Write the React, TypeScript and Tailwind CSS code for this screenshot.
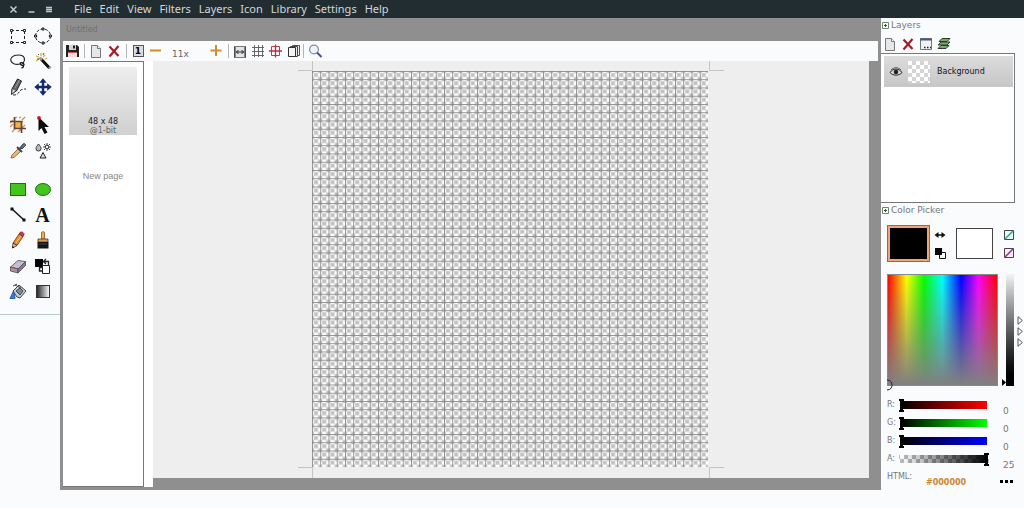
import type { ReactNode } from "react";

const MENUS = ["File", "Edit", "View", "Filters", "Layers", "Icon", "Library", "Settings", "Help"];

interface Tool {
  label: string;
  icon: ReactNode;
}

function Icon({ children }: { children: ReactNode }) {
  return (
    <svg aria-hidden="true" viewBox="0 0 18 18" className="size-[18px] shrink-0" fill="none">
      {children}
    </svg>
  );
}

const selectTools: Tool[] = [
  {
    label: "Rectangle selection",
    icon: (
      <Icon>
        <path d="M2 3.500H16M2 15.500H16" stroke="#222" strokeDasharray="3 2" />
        <path d="M2.500 4V15M15.500 4V15" stroke="#222" strokeDasharray="3 2" />
        <path d="M1.500 2.500h2v2h-2zM14.500 2.500h2v2h-2zM1.500 14.500h2v2h-2zM14.500 14.500h2v2h-2z" fill="#fff" stroke="#222" />
      </Icon>
    ),
  },
  {
    label: "Ellipse selection",
    icon: (
      <Icon>
        <ellipse cx="9" cy="9" rx="7.500" ry="7" stroke="#222" strokeDasharray="3 1.500" />
        <path d="M8 1h2v2H8zM8 15h2v2H8zM.6 8h2v2h-2zM15.400 8h2v2h-2z" fill="#fff" stroke="#111" />
      </Icon>
    ),
  },
  {
    label: "Lasso",
    icon: (
      <Icon>
        <path d="M13.500 11.500C17 8 16 3 9.500 3 3 3 1 6.500 2 9c1 3 5 4 9 3" stroke="#222" strokeWidth="1.100" />
        <path d="M11 11c1-1 4 0 4 1.500s-3 1.500-4-1.500M14 13c1 1 .5 2.500-1.500 3" stroke="#111" strokeWidth="1.300" />
      </Icon>
    ),
  },
  {
    label: "Magic wand",
    icon: (
      <Icon>
        <path d="M7 7l8.500 9" stroke="#111" strokeWidth="3" />
        <path d="M5.500 5.500L8 8M15 15l1.500 1.500" stroke="#999" strokeWidth="2.500" />
        <path d="M7 1v3M11 3L9 5M2 4l3 1M2 9l3-2M11 7l2-1" stroke="#d2ad35" strokeWidth="1.300" />
        <path d="M4 2l1 1M10 1l-1 2M3 7h2" stroke="#555" />
      </Icon>
    ),
  },
  {
    label: "Freehand selection",
    icon: (
      <Icon>
        <path d="M3 11L8.500 1l4 2L7.500 13l-4 2z" fill="#666" stroke="#222" />
        <path d="M6 10l4.500-8" stroke="#999" />
        <path d="M3 11l-.5 5.500L7 13" fill="#ddd" stroke="#222" />
        <path d="M4 17c4 0 5-1 6-3s3-3 7-3" stroke="#222" strokeDasharray="3 1.500" />
      </Icon>
    ),
  },
  {
    label: "Move",
    icon: (
      <Icon>
        <path d="M9 3v12M3 9h12" stroke="#14286e" strokeWidth="2.400" />
        <path d="M9 .3l3.700 4.500H5.300zM9 17.700l3.700-4.500H5.300zM.3 9l4.500-3.700v7.400zM17.700 9l-4.500-3.700v7.400z" fill="#14286e" />
      </Icon>
    ),
  },
];

const pickTools: Tool[] = [
  {
    label: "Crop",
    icon: (
      <Icon>
        <path d="M1 7l3-3M1 11l3-3M3 16l11-11M9 16l7-7M13 4l3-3M6 2l2-1M10 2l2-1" stroke="#d7894d" strokeWidth="1.200" />
        <rect x="5" y="5" width="8" height="8" fill="#f0b34a" />
        <path d="M5.500 1v11.500H17M1 5.500h11.500V17" stroke="#634438" strokeWidth="1.700" />
      </Icon>
    ),
  },
  {
    label: "Arrow",
    icon: (
      <Icon>
        <path d="M4.500 1v14l3-3 3 6 3-1.500-3-5.500H15z" fill="#0b0b0b" />
        <circle cx="5" cy="1.900" r="1.900" fill="#bf1830" />
      </Icon>
    ),
  },
  {
    label: "Color picker",
    icon: (
      <Icon>
        <path d="M2 16l1-3 6.500-6.500 2.500 2.500L5 15.500z" fill="#efb76c" stroke="#6b5848" strokeWidth=".8" />
        <path d="M8 5l5 5M10.500 7L14 3.500" stroke="#3c474f" strokeWidth="2" />
        <path d="M11.500 5.500L14 2c1-1 3 0 2.500 1.500L13 7z" fill="#65727c" stroke="#3c474f" />
      </Icon>
    ),
  },
  {
    label: "Effects",
    icon: (
      <Icon>
        <path d="M4.500 2C3 4 2 5 2 6.500a2.500 2.500 0 0 0 5 0C7 5 6 4 4.500 2z" fill="#bbb" stroke="#333" />
        <circle cx="13" cy="5" r="1.800" stroke="#333" />
        <path d="M13 1v2M13 7v2M9 5h2M15 5h2M10 2l1.500 1.500M16 2l-1.500 1.500M10 8l1.500-1.500M16 8l-1.500-1.500" stroke="#444" />
        <path d="M9 10.500l3 5.500H6z" fill="#ddd" stroke="#222" />
      </Icon>
    ),
  },
];

const drawTools: Tool[] = [
  {
    label: "Rectangle",
    icon: (
      <Icon>
        <rect x="1.500" y="3.500" width="15" height="12" fill="#42c51c" stroke="#226c15" />
      </Icon>
    ),
  },
  {
    label: "Ellipse",
    icon: (
      <Icon>
        <ellipse cx="9" cy="9.500" rx="7.500" ry="6" fill="#42c51c" stroke="#226c15" />
      </Icon>
    ),
  },
  {
    label: "Line",
    icon: (
      <Icon>
        <path d="M3 4l12 11" stroke="#111" strokeWidth="1.500" />
        <path d="M1.500 2.500h3v3h-3zM13.500 13.500h3v3h-3z" fill="#111" />
      </Icon>
    ),
  },
  {
    label: "Text",
    icon: <span className="pt-0.5 font-['Liberation_Serif',serif] text-xl leading-none font-bold text-[#111]">A</span>,
  },
  {
    label: "Pencil",
    icon: (
      <Icon>
        <path d="M4 12l6-9 4 2.500-6 9z" fill="#e58b2d" stroke="#6c3519" strokeWidth=".8" />
        <path d="M7 12l5-7.500" stroke="#ffc66a" />
        <path d="M10 3l1.500-2C13 .5 15.500 2 15 3.500l-1 2z" fill="#d9324a" stroke="#8b1f31" strokeWidth=".8" />
        <path d="M4 12l4 2.500L3.500 17z" fill="#e9c89e" stroke="#33231a" strokeWidth=".8" />
        <path d="M3.300 15v2.300l2-1z" fill="#111" />
      </Icon>
    ),
  },
  {
    label: "Brush",
    icon: (
      <Icon>
        <path d="M7.500 1.500c0-1 3-1 3 0V8h-3z" fill="#eeae48" stroke="#8a5a1d" strokeWidth=".8" />
        <path d="M4 8h10v3H4z" fill="#d5a052" stroke="#4a3620" strokeWidth=".8" />
        <path d="M3.500 11h11v6.500h-11z" fill="#151515" />
        <path d="M5 13h8" stroke="#444" />
      </Icon>
    ),
  },
  {
    label: "Eraser",
    icon: (
      <Icon>
        <path d="M1.500 10L9 3.500l7.500 1L9 12z" fill="#c5bed0" stroke="#4d4856" strokeWidth=".8" />
        <path d="M1.500 10L9 12v4l-7.500-2z" fill="#b49095" stroke="#4d4856" strokeWidth=".8" />
        <path d="M9 12l7.500-7.500v4L9 16z" fill="#827b91" stroke="#4d4856" strokeWidth=".8" />
      </Icon>
    ),
  },
  {
    label: "Recolor",
    icon: (
      <Icon>
        <path d="M1 2h8v8H1z" fill="#050505" />
        <path d="M8.500 8.500h7v8h-7z" fill="#fff" stroke="#222" />
        <path d="M9 4.500h5.500V8M12 2L9.500 4.500 12 7M8 10.500H5.500V14H8" stroke="#222" strokeWidth="1.300" />
      </Icon>
    ),
  },
  {
    label: "Flood fill",
    icon: (
      <Icon>
        <path d="M1 16.500L5 8l1 8.500z" fill="#3c78d8" stroke="#285db4" />
        <path d="M4 9l6-6 7 6-6 7-3-1z" fill="#c4ccd4" stroke="#3b4650" />
        <path d="M7 9l4-3 3 3-3 4z" fill="#7c8b98" stroke="#3b4650" />
        <path d="M6 3l6 3M4 4l4-2" stroke="#444" />
      </Icon>
    ),
  },
  {
    label: "Gradient",
    icon: (
      <Icon>
        <defs>
          <linearGradient id="toolGradient">
            <stop stopColor="#222" />
            <stop offset="1" stopColor="#fff" />
          </linearGradient>
        </defs>
        <rect x="2.500" y="3.500" width="13" height="12" fill="url(#toolGradient)" stroke="#333" />
      </Icon>
    ),
  },
];

const pageIcon = (
  <Icon>
    <path d="M4.500 3.500h6l3 3v9h-9z" fill="#e6e7e8" stroke="#777" />
    <path d="M10.500 3.500v3h3" fill="#fff" stroke="#777" />
  </Icon>
);

const deleteIcon = (
  <Icon>
    <path d="M4.500 4.500l9 9.500M13.500 4L4.500 14.500" stroke="#a51d24" strokeWidth="2.200" />
  </Icon>
);

function ToolGroup({ tools, className }: { tools: Tool[]; className: string }) {
  return (
    <div className={`grid auto-rows-fr grid-cols-[25px_25px] ${className}`}>
      {tools.map((tool) => (
        <button key={tool.label} type="button" aria-label={tool.label} className="flex items-center justify-center">
          {tool.icon}
        </button>
      ))}
    </div>
  );
}

function BarButton({ label, children }: { label: string; children: ReactNode }) {
  return (
    <button type="button" aria-label={label} className="flex w-[18px] items-center justify-center">
      {children}
    </button>
  );
}

function Separator() {
  return <span className="mr-0.5 h-[14px] w-px bg-[#b5b5b5]" />;
}

function MenuBar() {
  return (
    <header className="flex h-[18px] items-center bg-[#222d32] font-['Noto_Sans',sans-serif] text-[11px] text-[#d3d8da]">
      <div className="flex w-[74px] pl-1">
        <BarButton label="Close">
          <Icon>
            <path d="M6.500 6.500l6 6M12.500 6.500l-6 6" stroke="#c3c8ca" strokeWidth="1.500" />
          </Icon>
        </BarButton>
        <BarButton label="Minimize">
          <Icon>
            <path d="M6.500 12h6" stroke="#c3c8ca" strokeWidth="1.500" />
          </Icon>
        </BarButton>
        <BarButton label="Maximize">
          <Icon>
            <path d="M6 7.500h6M6 9.500h6M6 11.500h6" stroke="#c3c8ca" strokeWidth="1.300" />
          </Icon>
        </BarButton>
      </div>
      <nav className="flex gap-2">
        {MENUS.map((menu) => (
          <button key={menu} type="button">
            {menu}
          </button>
        ))}
      </nav>
    </header>
  );
}

function EditorBar() {
  return (
    <div className="mr-[3px] flex h-5 items-center bg-[#fafbfd]">
      <BarButton label="Save">
        <Icon>
          <path d="M3 3h11l2 2v10H3z" fill="#222" />
          <path d="M6 3h7v5H6z" fill="#d5d5d5" />
          <path d="M10 3.500h2v3h-2z" fill="#222" />
          <path d="M5 10h9v5H5z" fill="#f3d8d8" />
          <path d="M5 10.500h9" stroke="#c25a5a" />
        </Icon>
      </BarButton>
      <span className="w-[3px]" />
      <Separator />
      <BarButton label="New page">{pageIcon}</BarButton>
      <BarButton label="Delete page">{deleteIcon}</BarButton>
      <span className="w-[3px]" />
      <Separator />
      <BarButton label="Actual size">
        <span className="flex h-3 w-[11px] items-center justify-center border border-[#555] bg-[#ddd] text-[9px] leading-none font-bold">
          1
        </span>
      </BarButton>
      <BarButton label="Zoom out">
        <Icon>
          <path d="M3 8.500h11" stroke="#d48a28" strokeWidth="2" />
        </Icon>
      </BarButton>
      <input aria-label="Zoom" defaultValue="11x" className="mt-1.5 w-[42px] pl-[7px] text-[9px] leading-3 text-[#666]" />
      <BarButton label="Zoom in">
        <Icon>
          <path d="M3.500 8.500h11M9 3v11" stroke="#d48a28" strokeWidth="2" />
        </Icon>
      </BarButton>
      <span className="w-[3px]" />
      <Separator />
      <BarButton label="Fit width">
        <Icon>
          <rect x="3.500" y="4.500" width="11" height="11" fill="#e4e4e4" stroke="#777" />
          <path d="M4 5v10M14 5v10M5 10h8M7.500 8L5.500 10l2 2M10.500 8l2 2-2 2" stroke="#222" />
        </Icon>
      </BarButton>
      <BarButton label="Show grid">
        <Icon>
          <path d="M5.500 3v12M9.500 3v12M13.500 3v12M3 5.500h12M3 9.500h12M3 13.500h12" stroke="#666" />
        </Icon>
      </BarButton>
      <BarButton label="Show center lines">
        <Icon>
          <path d="M4.500 4.500h8v9h-8z" stroke="#a8444c" />
          <path d="M8.500 2.500v13M2 9h13" stroke="#c22b35" strokeWidth="1.300" />
        </Icon>
      </BarButton>
      <BarButton label="Show pages">
        <Icon>
          <path d="M7.500 3.500h7v10h-7z" fill="#eee" stroke="#555" />
          <path d="M5.500 4.500h7v10h-7z" fill="#eee" stroke="#444" />
          <path d="M3.500 5.500h7v9h-7z" fill="#f4f4f4" stroke="#333" />
        </Icon>
      </BarButton>
      <Separator />
      <BarButton label="Search">
        <Icon>
          <circle cx="8" cy="7.500" r="4.400" fill="#eef2fa" stroke="#85879c" strokeWidth="1.200" />
          <path d="M11 10.500l4.500 4.500" stroke="#504b91" strokeWidth="2" />
        </Icon>
      </BarButton>
    </div>
  );
}

// 48 x 48 cells over a transparency checkerboard, with the page corner marks.
function PixelCanvas() {
  return (
    <svg role="img" aria-label="Icon canvas" viewBox="0 0 426 417" className="h-[417px] w-[426px]">
      <defs>
        <pattern id="cell" x="14" y="10" width="8.250" height="8.250" patternUnits="userSpaceOnUse">
          <rect width="8.250" height="8.250" fill="#fff" />
          <path d="M0 0h2v2H0zM6 0h2.250v2H6zM2 2h4v4H2zM0 6h2v2.250H0zM6 6h2.250v2.250H6z" fill="#c2c2c2" />
          <path d="M0 .5h8.250M.5 0v8.250" stroke="#8c8c8c" strokeWidth=".9" />
        </pattern>
      </defs>
      <rect x="14" y="10" width="396" height="396" fill="url(#cell)" />
      <path d="M0 9.500h14.500V0M426 9.500H411.500V0M0 406.500h14.500V417M426 406.500H411.500V417" fill="none" stroke="#c3c3c3" />
    </svg>
  );
}

function Editor() {
  return (
    <main className="flex min-w-0 flex-1 flex-col self-start bg-[#8f8f8f] pb-[3px] pl-[3px]">
      <h1 className="flex h-[23px] items-center pl-[3px] text-[8px] text-[#6c7174]">Untitled</h1>
      <EditorBar />
      <div className="mr-3 flex items-start">
        <section aria-label="Pages" className="w-[90px] bg-white pr-[9px]">
          <div className="flex h-[426px] flex-col items-center border border-l-0 border-[#777] pt-[5px]">
            <button
              type="button"
              className="flex h-[68px] w-[68px] flex-col items-center justify-end bg-linear-to-b from-[#eeeeee] to-[#d0d0d0] text-[8px] leading-[9px] text-[#222]"
            >
              <span>48 x 48</span>
              <span className="text-[#666]">@1-bit</span>
            </button>
            <button type="button" className="mt-[35px] font-['Liberation_Sans',sans-serif] text-[9px] leading-3 text-[#888]">
              New page
            </button>
          </div>
        </section>
        <div className="flex min-w-0 flex-1 justify-center bg-[#eeeeee]">
          <PixelCanvas />
        </div>
      </div>
    </main>
  );
}

function PanelTitle({ children }: { children: ReactNode }) {
  return (
    <h2 className="flex h-4 items-center gap-0.5 text-[9px] text-[#777]">
      <svg aria-hidden="true" viewBox="0 0 8 8" className="size-2" fill="none">
        <path d="M1.500 .5h6v6h-6z" fill="#fff" stroke="#6a8a6a" />
        <path d="M3 3.500h3M4.500 2v3" stroke="#285a28" />
      </svg>
      {children}
    </h2>
  );
}

function LayersPanel() {
  return (
    <section aria-label="Layers">
      <PanelTitle>Layers</PanelTitle>
      <div className="flex h-[19px] items-center">
        <BarButton label="New layer">{pageIcon}</BarButton>
        <BarButton label="Delete layer">{deleteIcon}</BarButton>
        <BarButton label="Layer properties">
          <Icon>
            <path d="M3.500 3.500h11v11h-11z" fill="#f1f2f6" stroke="#777" />
            <path d="M3 4.500h12" stroke="#4b5870" strokeWidth="2" />
            <path d="M7 12.500h1.500M10 12.500h1.500M13 12.500h1" stroke="#222" strokeWidth="1.500" />
          </Icon>
        </BarButton>
        <BarButton label="Merge layers">
          <Icon>
            <path d="M6 10.500h8l-3 3H3zM6 7h9l-3 3H3zM7 3.500h8l-3 3H4z" fill="#7fa873" stroke="#2b3d27" />
          </Icon>
        </BarButton>
      </div>
      <div className="mr-[9px] h-[150px] border border-l-0 border-[#777] bg-white pt-0.5 pr-px pl-[3px]">
        <button
          type="button"
          className="flex h-[31px] w-full items-center bg-linear-to-b from-[#dcdcdc] to-[#c6c6c6] pl-[5px] text-[8px] text-[#111]"
        >
          <svg aria-hidden="true" viewBox="0 0 14 10" className="mr-[5px] h-2.5 w-3.5" fill="none">
            <path d="M1 5.500C4 1 10 1 13 5.500 10 9 4 9 1 5.500z" fill="#ddd" stroke="#222" />
            <circle cx="7" cy="5" r="2.300" fill="#222" />
            <path d="M2 3C5 0 9 0 12 3" stroke="#555" />
          </svg>
          <span className="mr-[7px] size-[22px] bg-[conic-gradient(#d4d4d4_25%,#fff_0_50%,#d4d4d4_0_75%,#fff_0)] bg-size-[8px_8px]" />
          Background
        </button>
      </div>
    </section>
  );
}

const channels = [
  { name: "R", value: "0", track: "bg-[linear-gradient(90deg,#000,#f00)] bg-size-[86px_8px]", max: false },
  { name: "G", value: "0", track: "bg-[linear-gradient(90deg,#000,#0f0)] bg-size-[86px_8px]", max: false },
  { name: "B", value: "0", track: "bg-[linear-gradient(90deg,#000,#00f)] bg-size-[86px_8px]", max: false },
  {
    name: "A",
    value: "25",
    track:
      "[background:linear-gradient(90deg,transparent,#000)_center/86px_8px_no-repeat,conic-gradient(#bbb_25%,#fff_0_50%,#bbb_0_75%,#fff_0)_center/8px_8px_repeat-x]",
    max: true,
  },
];

function ChannelRow({ name, value, track, max }: (typeof channels)[number]) {
  return (
    <div className="flex h-[18px] items-center text-[#777]">
      <label htmlFor={`channel-${name}`} className="w-3 text-[8px] leading-none">
        {name}:
      </label>
      <input
        id={`channel-${name}`}
        type="range"
        min={0}
        max={255}
        defaultValue={max ? 255 : 0}
        className={`h-[13px] w-[90px] appearance-none bg-center bg-no-repeat ${track} [&::-webkit-slider-thumb]:h-[13px] [&::-webkit-slider-thumb]:w-[5px] [&::-webkit-slider-thumb]:appearance-none [&::-webkit-slider-thumb]:[background:linear-gradient(#000_0_0)_top/5px_2px_no-repeat,linear-gradient(#000_0_0)_bottom/5px_2px_no-repeat,linear-gradient(#000_0_0)_center/3px_100%_no-repeat]`}
      />
      <output htmlFor={`channel-${name}`} className="mt-3 ml-[14px] text-[9px] leading-none">
        {value}
      </output>
    </div>
  );
}

function ColorPicker() {
  return (
    <section aria-label="Color Picker">
      <PanelTitle>Color Picker</PanelTitle>
      <div className="mt-1.5 flex h-[37px] items-center pl-1.5">
        <button
          type="button"
          aria-label="Foreground color"
          className="h-[37px] w-[43px] border border-[#c4552e] bg-black ring-2 ring-[#f3a477] ring-inset"
        />
        <div className="flex w-[26px] flex-col items-start pl-px">
          <BarButton label="Swap colors">
            <Icon>
              <path d="M5 9h8" stroke="#111" strokeWidth="1.500" />
              <path d="M3.500 9l4-3v6zM14.500 9l-4-3v6z" fill="#111" />
            </Icon>
          </BarButton>
          <BarButton label="Reset colors">
            <Icon>
              <path d="M8.500 8.500h6v6h-6z" fill="#fff" stroke="#111" />
              <path d="M4 4h7v7H4z" fill="#050505" />
            </Icon>
          </BarButton>
        </div>
        <button type="button" aria-label="Background color" className="h-[31px] w-[37px] border border-[#444] bg-white" />
        <div className="ml-[7px] flex flex-col">
          <BarButton label="Transparent">
            <Icon>
              <path d="M4.500 4.500h9v9h-9z" fill="#e4fbf8" stroke="#444" />
              <path d="M5 13l8-8" stroke="#289f97" strokeWidth="1.500" />
            </Icon>
          </BarButton>
          <BarButton label="Inverse">
            <Icon>
              <path d="M4.500 4.500h9v9h-9z" fill="#fbe9fb" stroke="#444" />
              <path d="M5 13l8-8" stroke="#8e368e" strokeWidth="1.500" />
            </Icon>
          </BarButton>
        </div>
      </div>

      <div className="mt-3 flex h-[112px] pl-1.5">
        <button
          type="button"
          aria-label="Hue and saturation"
          className="relative w-[111px] border border-[#888] bg-[linear-gradient(#80808000,#808080),linear-gradient(90deg,#f00,#ff0_17%,#0f0_33%,#0ff_50%,#00f_67%,#f0f_83%,#f00)]"
        >
          <svg aria-hidden="true" viewBox="0 0 6 12" className="absolute -bottom-1.5 -left-px h-3 w-1.5" fill="none">
            <path d="M0 1c3.500 0 5 2.500 5 5s-1.500 5-5 5" stroke="#222" />
          </svg>
        </button>
        <svg aria-hidden="true" viewBox="0 0 5 7" className="ml-[3px] h-[7px] w-[5px] self-end">
          <path d="M1 0l4 3.500L1 7z" fill="#000" />
        </svg>
        <div className="w-2 bg-linear-to-b from-[#f4f4f4] to-black" />
        <div className="ml-[3px] flex flex-col justify-center gap-0.5 pt-0.5">
          {["Lighter", "Same", "Darker"].map((name) => (
            <button key={name} type="button" aria-label={name}>
              <svg aria-hidden="true" viewBox="0 0 6 9" className="h-[9px] w-1.5">
                <path d="M1 .7L5.300 4.500 1 8.300z" fill="#fff" stroke="#444" strokeWidth=".9" />
              </svg>
            </button>
          ))}
        </div>
      </div>

      <div className="mt-2.5 pl-1.5">
        {channels.map((channel) => (
          <ChannelRow key={channel.name} {...channel} />
        ))}
        <div className="flex h-[18px] items-center">
          <label htmlFor="html-color" className="w-[39px] text-[8px] leading-none text-[#777]">
            HTML:
          </label>
          <input
            id="html-color"
            defaultValue="#000000"
            className="mt-2.5 w-[72px] text-[8px] leading-none font-bold text-[#cf842f]"
          />
          <button type="button" aria-label="More colors" className="mt-2 ml-0.5 flex gap-0.5">
            <span className="size-[3px] bg-black" />
            <span className="size-[3px] bg-black" />
            <span className="size-[3px] bg-black" />
          </button>
        </div>
      </div>
    </section>
  );
}

export default function App() {
  return (
    <div className="flex min-h-screen flex-col bg-[#fafbfd] font-['DejaVu_Sans',sans-serif]">
      <MenuBar />
      <div className="flex flex-1 items-start">
        <aside aria-label="Tools" className="flex w-[60px] flex-col gap-3 border-b border-[#bccbd0] pt-[5px] pb-2.5 pl-[5px]">
          <ToolGroup tools={selectTools} className="h-[77px]" />
          <ToolGroup tools={pickTools} className="h-[52px]" />
          <ToolGroup tools={drawTools} className="h-[128px]" />
        </aside>
        <Editor />
        <aside aria-label="Panels" className="w-[143px]">
          <LayersPanel />
          <ColorPicker />
        </aside>
      </div>
    </div>
  );
}
